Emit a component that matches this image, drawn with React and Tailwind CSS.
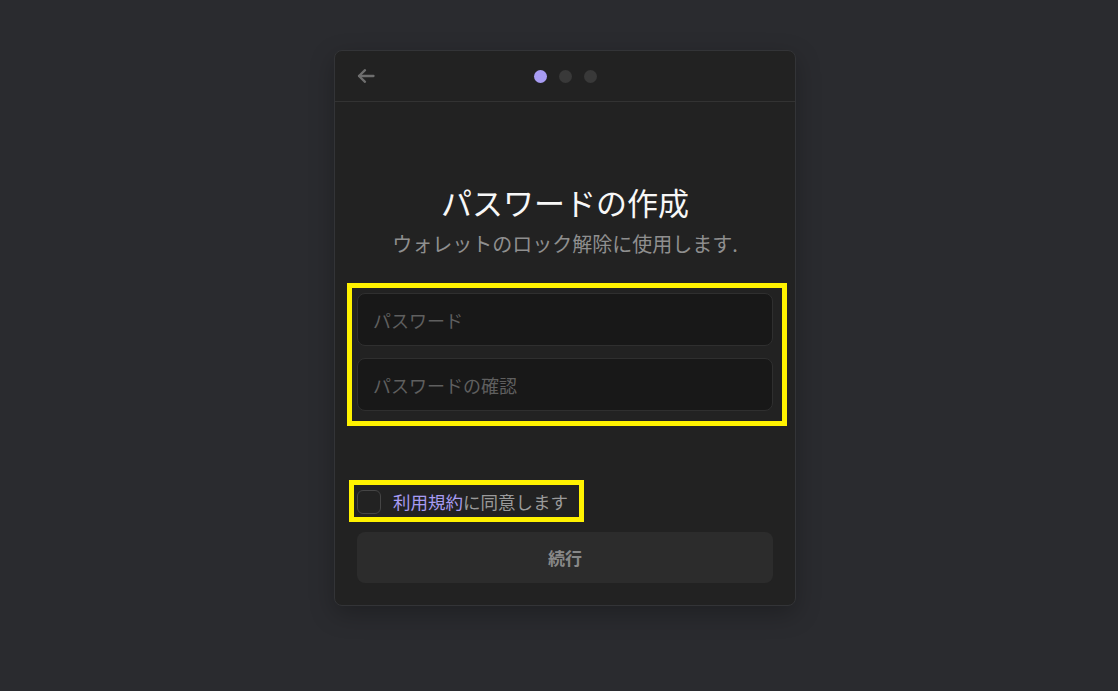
import React, { useState } from 'react';

const font = { fontFamily: '"Noto Sans CJK JP", "Noto Sans", sans-serif' };

const CreatePassword = () => {
  const [password, setPassword] = useState('');
  const [confirm, setConfirm] = useState('');
  const [agreed, setAgreed] = useState(false);

  return (
    <div
      className="min-h-screen bg-[#2a2b2f] flex justify-center items-start pt-[50px] pl-[12px]"
      style={font}
    >
      <div className="w-[462px] h-[556px] bg-[#222222] border border-[#333437] rounded-[8px] shadow-[0_8px_24px_rgba(0,0,0,0.25)] flex flex-col overflow-hidden">
        {/* Header */}
        <div className="shrink-0 h-[51px] border-b border-[#333333] grid grid-cols-[1fr_auto_1fr] items-center px-[22px]">
          <button className="w-[18px] h-[16px] text-[#6e6e6e]">
            <svg width="18" height="16" viewBox="0 0 18 16" fill="none" stroke="currentColor" strokeWidth="2.3" strokeLinecap="round" strokeLinejoin="round">
              <path d="M16.5 8H2" />
              <path d="M8 2.2L2 8l6 5.8" />
            </svg>
          </button>
          <div className="flex items-center gap-[12px] pt-[1px]">
            <span className="w-[13px] h-[13px] rounded-full bg-[#a89cf3]" />
            <span className="w-[13px] h-[13px] rounded-full bg-[#393939]" />
            <span className="w-[13px] h-[13px] rounded-full bg-[#393939]" />
          </div>
          <div />
        </div>

        {/* Body */}
        <div className="flex-1 flex flex-col px-[22px]">
          <h1 className="mt-[82px] text-center text-[31px] leading-[36px] text-[#f7f7f7]">
            パスワードの作成
          </h1>
          <p className="mt-[10px] text-center text-[20px] leading-[28px] text-[#8f8f8f]">
            ウォレットのロック解除に使用します.
          </p>

          {/* Inputs */}
          <div className="relative mt-[35px] flex flex-col gap-[12px]">
            <input
              type="password"
              value={password}
              onChange={(e) => setPassword(e.target.value)}
              placeholder="パスワード"
              className="h-[53px] w-full rounded-[8px] bg-[#181818] border border-[#2f2f2f] px-[15px] text-[18px] text-[#dddddd] placeholder-[#5f5f5f] outline-none"
            />
            <input
              type="password"
              value={confirm}
              onChange={(e) => setConfirm(e.target.value)}
              placeholder="パスワードの確認"
              className="h-[53px] w-full rounded-[8px] bg-[#181818] border border-[#2f2f2f] px-[15px] text-[18px] text-[#dddddd] placeholder-[#5f5f5f] outline-none"
            />
            <div className="pointer-events-none absolute -left-[10px] -right-[14px] -top-[10px] -bottom-[15px] border-[5px] border-[#fff200]" />
          </div>

          {/* Terms */}
          <div className="mt-[79px] flex">
            <label className="relative flex items-center gap-[12px] h-[24px] cursor-pointer">
              <input
                type="checkbox"
                checked={agreed}
                onChange={(e) => setAgreed(e.target.checked)}
                className="appearance-none w-[24px] h-[24px] rounded-[6px] border border-[#454545] bg-[#222222]"
              />
              <span className="text-[17.5px] leading-[24px] text-[#9a9a9a]">
                <span className="text-[#a89cf3]">利用規約</span>に同意します
              </span>
              <div className="pointer-events-none absolute -left-[8px] -right-[16px] -top-[10px] -bottom-[8px] border-[5px] border-[#fff200]" />
            </label>
          </div>

          {/* Continue */}
          <button className="mt-[18px] h-[51px] w-full rounded-[8px] bg-[#2c2c2c] text-[17px] font-bold text-[#888888]">
            続行
          </button>
        </div>
      </div>
    </div>
  );
};

export default CreatePassword;
